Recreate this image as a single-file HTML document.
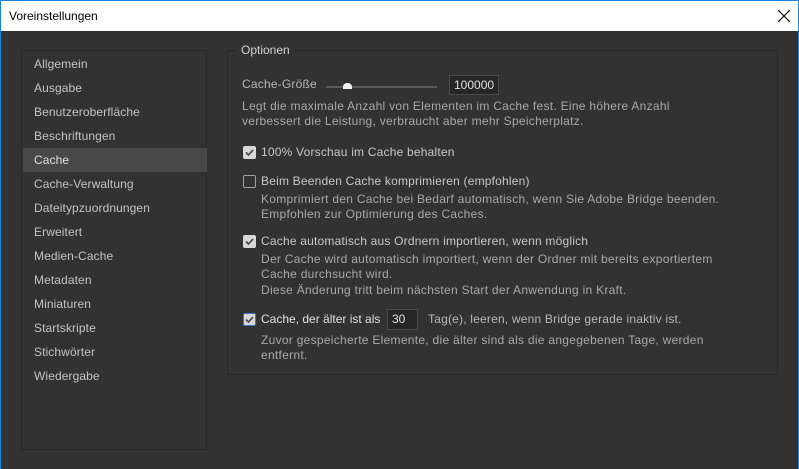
<!DOCTYPE html>
<html><head><meta charset="utf-8"><style>
*{margin:0;padding:0;box-sizing:border-box}
body{width:799px;height:469px;overflow:hidden;background:#323232;font-family:"Liberation Sans",sans-serif;font-size:12px;position:relative}
.frame{position:absolute;left:0;top:0;width:799px;height:469px;border:1px solid #1883d7;border-bottom:none}
.title{position:absolute;left:1px;top:1px;width:797px;height:30px;background:#fff;color:#000}
.title span{position:absolute;left:8px;top:8px;font-size:12px}
.x{position:absolute;left:776px;top:8px}
.side{position:absolute;left:21px;top:50px;width:186px;height:400px;border:1px solid #262626;background:#323232}
.it{position:absolute;left:12px;color:#c4c4c4;white-space:nowrap;letter-spacing:0.1px}
.sel{position:absolute;left:1px;top:97px;width:184px;height:24px;background:#484848}
.panel{position:absolute;left:227px;top:50px;width:551px;height:325px;border:1px solid #262626}
.leg{position:absolute;left:236px;top:43px;background:#323232;color:#d2d2d2;padding:0 5px}
.t{position:absolute;white-space:nowrap;color:#c8c8c8;letter-spacing:0.2px}
.d{position:absolute;white-space:nowrap;color:#a9a9a9;line-height:15px;letter-spacing:0.28px}
.cb{position:absolute;width:13px;height:13px;background:#d8d8d8;border-radius:2px}
.cb.off{background:none;border:1px solid #a0a0a0}
.cb svg{position:absolute;left:2px;top:2px}
.inp{position:absolute;border:1px solid #4a4a4a;background:#262626;color:#e0e0e0;padding-left:4px;line-height:18px}
</style></head><body>
<div class="frame"></div>
<div class="title"><span>Voreinstellungen</span>
<svg class="x" width="14" height="14" viewBox="0 0 14 14"><path d="M1 1L13 13M13 1L1 13" stroke="#000" stroke-width="1.1"/></svg></div>
<div class="side">
<div class="sel"></div>
<div class="it" style="top:6px">Allgemein</div>
<div class="it" style="top:30px">Ausgabe</div>
<div class="it" style="top:54px">Benutzeroberfläche</div>
<div class="it" style="top:78px">Beschriftungen</div>
<div class="it" style="top:102px;color:#e0e0e0">Cache</div>
<div class="it" style="top:126px">Cache-Verwaltung</div>
<div class="it" style="top:150px">Dateitypzuordnungen</div>
<div class="it" style="top:174px">Erweitert</div>
<div class="it" style="top:198px">Medien-Cache</div>
<div class="it" style="top:222px">Metadaten</div>
<div class="it" style="top:246px">Miniaturen</div>
<div class="it" style="top:270px">Startskripte</div>
<div class="it" style="top:294px">Stichwörter</div>
<div class="it" style="top:318px">Wiedergabe</div>
</div>
<div class="panel"></div>
<div class="leg">Optionen</div>
<div class="t" style="left:242px;top:77px;color:#b8b8b8">Cache-Größe</div>
<div style="position:absolute;left:326px;top:86px;width:111px;height:2px;background:#5a5a5a"></div>
<div style="position:absolute;left:343px;top:83px;width:9px;height:6px;background:#f0f0f0;border-radius:4px 4px 0 0"></div>
<div class="inp" style="left:449px;top:75px;width:50px;height:20px">100000</div>
<div class="d" style="left:242px;top:99px">Legt die maximale Anzahl von Elementen im Cache fest. Eine höhere Anzahl<br>verbessert die Leistung, verbraucht aber mehr Speicherplatz.</div>

<div class="cb" style="left:243px;top:146px"><svg width="9" height="9"><path d="M1 4.5L3.5 7L8 2" stroke="#444" stroke-width="1.6" fill="none"/></svg></div>
<div class="t" style="left:261px;top:145px">100% Vorschau im Cache behalten</div>

<div class="cb off" style="left:243px;top:175px"></div>
<div class="t" style="left:261px;top:174px">Beim Beenden Cache komprimieren (empfohlen)</div>
<div class="d" style="left:261px;top:192px">Komprimiert den Cache bei Bedarf automatisch, wenn Sie Adobe Bridge beenden.<br>Empfohlen zur Optimierung des Caches.</div>

<div class="cb" style="left:243px;top:235px"><svg width="9" height="9"><path d="M1 4.5L3.5 7L8 2" stroke="#444" stroke-width="1.6" fill="none"/></svg></div>
<div class="t" style="left:261px;top:234px">Cache automatisch aus Ordnern importieren, wenn möglich</div>
<div class="d" style="left:261px;top:252px">Der Cache wird automatisch importiert, wenn der Ordner mit bereits exportiertem<br>Cache durchsucht wird.</div>
<div class="d" style="left:261px;top:283px">Diese Änderung tritt beim nächsten Start der Anwendung in Kraft.</div>

<div class="cb" style="left:243px;top:313px;border:1px solid #3a78c8"><svg width="9" height="9" style="left:1px;top:1px"><path d="M1 4.5L3.5 7L8 2" stroke="#444" stroke-width="1.6" fill="none"/></svg></div>
<div class="t" style="left:261px;top:312px;color:#e0e0e0;letter-spacing:0">Cache, der älter ist als</div>
<div class="inp" style="left:387px;top:309px;width:31px;height:21px">30</div>
<div class="t" style="left:428px;top:312px;color:#b8b8b8">Tag(e), leeren, wenn Bridge gerade inaktiv ist.</div>
<div class="d" style="left:261px;top:333px">Zuvor gespeicherte Elemente, die älter sind als die angegebenen Tage, werden<br>entfernt.</div>
</body></html>
